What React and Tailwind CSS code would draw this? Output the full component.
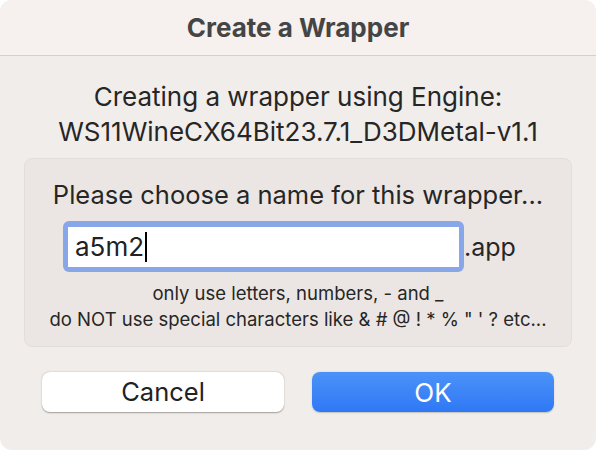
import React from "react";

export default function App() {
  const font = { fontFamily: 'Inter, "Noto Sans", sans-serif' };
  return (
    <div className="w-[596px] h-[450px] bg-white" style={font}>
      <div className="h-full w-full rounded-[12px] bg-[#f1edea] overflow-hidden flex flex-col">
        <div className="h-[56px] shrink-0 bg-[#f6f0ee] border-b border-[#d6d0cd] flex items-center justify-center">
          <span className="text-[26px] font-bold text-[#454545]">Create a Wrapper</span>
        </div>
        <div className="flex flex-col items-center pt-[23px] text-[26px] leading-[35px] text-[#262626]">
          <div>Creating a wrapper using Engine:</div>
          <div>WS11WineCX64Bit23.7.1_D3DMetal-v1.1</div>
        </div>
        <div className="mx-[24px] mt-[9px] h-[189px] rounded-[8px] bg-[#ebe6e3] border border-[#e3dedb] flex flex-col items-center pt-[19px]">
          <div className="text-[25.5px] leading-[34px] text-[#262626] whitespace-nowrap">Please choose a name for this wrapper...</div>
          <div className="self-start ml-[38px] mt-[9px] flex items-end">
            <div className="w-[401px] h-[51px] rounded-[6px] bg-[#88a7e8] p-[5px] pt-[6px]">
              <div className="h-full bg-white flex items-center pl-[7px]">
                <span className="text-[26px] text-[#222] leading-none">a5m2</span>
                <span className="w-[1.5px] h-[30px] bg-black ml-[1px]"></span>
              </div>
            </div>
            <span className="text-[25px] text-[#262626] leading-[26px] mb-[12px]">.app</span>
          </div>
          <div className="mt-[8px] text-[18.5px] leading-[26px] text-[#262626] text-center whitespace-nowrap">
            <div>only use letters, numbers, - and _</div>
            <div>do NOT use special characters like &amp; # @ ! * % " ' ? etc...</div>
          </div>
        </div>
        <div className="flex justify-center gap-[28px] mt-[25px]">
          <button className="w-[242px] h-[40px] rounded-[8px] bg-white text-[25.5px] text-[#222] shadow-[0_0.5px_1.5px_rgba(0,0,0,0.35)]">Cancel</button>
          <button className="w-[242px] h-[40px] rounded-[8px] bg-gradient-to-b from-[#4b92f8] to-[#2f78f5] text-[26px] text-white shadow-[0_0.5px_1.5px_rgba(0,0,0,0.2)]">OK</button>
        </div>
      </div>
    </div>
  );
}
